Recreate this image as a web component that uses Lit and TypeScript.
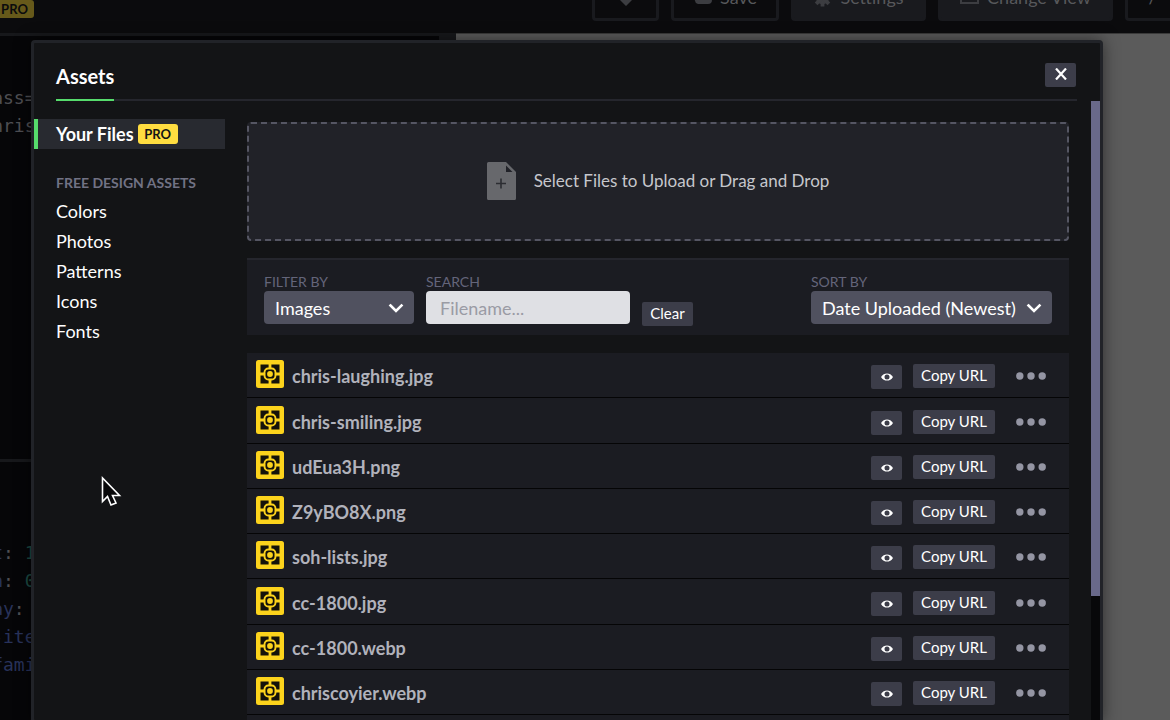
import { LitElement, html, css, svg } from "lit";
import { customElement, property } from "lit/decorators.js";

const base = css`
  * {
    box-sizing: border-box;
  }
  button,
  input,
  select {
    font-family: inherit;
    margin: 0;
    border: 0;
  }
  svg {
    display: block;
    flex: none;
  }
`;

const chevron = html`<svg class="chevron" width="16" height="10" viewBox="0 0 16 10" aria-hidden="true">
  <path d="M2.500 2.500L8 8l5.500-5.500" fill="none" stroke="#fff" stroke-width="2.600" stroke-linecap="square" />
</svg>`;

@customElement("asset-row")
class AssetRow extends LitElement {
  @property() name = "";

  static styles = [
    base,
    css`
      :host {
        display: flex;
        align-items: center;
        height: 45px;
        padding: 2px 23px 0 9px;
        background: #1b1c22;
        border-bottom: 1px solid #050506;
      }
      .name {
        flex: 1;
        margin-left: 8px;
        font-size: 18px;
        font-weight: 700;
        line-height: 24px;
        color: #b1b2bb;
      }
      .thumb {
        margin-bottom: 4px;
      }
      .btn {
        display: flex;
        align-items: center;
        justify-content: center;
        height: 24px;
        padding: 0;
        border-radius: 2px;
        background: #3c3d49;
        color: #fff;
        font-size: 15px;
        line-height: 20px;
      }
      .eye {
        width: 31px;
        margin: 2px 11px 0 0;
      }
      .copy {
        width: 82px;
        margin-right: 21px;
        padding-bottom: 2px;
      }
      .more {
        padding: 0;
        background: none;
      }
    `,
  ];

  render() {
    return html`
      <svg class="thumb" width="28" height="28" viewBox="0 0 28 28" aria-hidden="true">
        <rect width="28" height="28" rx="2.500" fill="#fcd31c" />
        <rect x="4.500" y="4.500" width="19" height="19" fill="#14120a" />
        <path d="M14 4v20M4 14h20" stroke="#fcd31c" stroke-width="2.800" />
        <rect x="7.600" y="7.600" width="12.800" height="12.800" rx="4.600" fill="#fcd31c" />
        <rect x="9.500" y="9.500" width="9" height="9" rx="2.800" fill="#14120a" />
        <circle cx="14" cy="14" r="2.900" fill="#fcd31c" />
      </svg>
      <span class="name">${this.name}</span>
      <button class="btn eye" aria-label="Preview ${this.name}">
        <svg width="12" height="8" viewBox="0 0 12 8">
          <path d="M0 4C1.600 1.400 3.600 .4 6 .4S10.400 1.400 12 4C10.400 6.600 8.400 7.600 6 7.600S1.600 6.600 0 4z" fill="#fff" />
          <circle cx="6" cy="4" r="2.500" fill="#3c3d49" />
        </svg>
      </button>
      <button class="btn copy">Copy URL</button>
      <button class="more" aria-label="More actions for ${this.name}">
        <svg width="30" height="8" viewBox="0 0 30 8" fill="#9495a3">
          <circle cx="3.800" cy="4" r="3.700" />
          <circle cx="15" cy="4" r="3.700" />
          <circle cx="26.200" cy="4" r="3.700" />
        </svg>
      </button>
    `;
  }
}

@customElement("editor-backdrop")
class EditorBackdrop extends LitElement {
  static styles = [
    base,
    css`
      :host {
        display: flex;
        flex-direction: column;
        height: 100%;
        background: #060608;
      }
      .bar {
        display: flex;
        align-items: flex-end;
        justify-content: space-between;
        height: 33px;
        overflow: hidden;
        background: #0b0b0d;
      }
      .pro {
        align-self: flex-start;
        margin-left: -5px;
        width: 39px;
        height: 18px;
        border-radius: 3px;
        background: #66591a;
        color: #0b0b0d;
        font-size: 13px;
        font-weight: 700;
        line-height: 19px;
        text-align: center;
      }
      .tools {
        display: flex;
        gap: 12px;
        margin: 0 -18px 12px 0;
      }
      .tool {
        display: flex;
        align-items: center;
        justify-content: center;
        gap: 8px;
        height: 48px;
        border: 3px solid #191a1e;
        border-radius: 4px;
        background: #0b0b0d;
        color: #57585b;
        font-size: 18px;
        line-height: 24px;
      }
      .solid {
        background: #191a1e;
      }
      .heart {
        width: 67px;
      }
      .save {
        width: 108px;
      }
      .settings {
        width: 135px;
      }
      .view {
        width: 175px;
      }
      .slash {
        width: 63px;
      }
      .work {
        flex: 1;
        display: grid;
        grid-template-columns: 39% 1fr;
        min-height: 0;
      }
      .editors {
        display: grid;
        grid-template-rows: 426px 1fr;
        border-right: 17px solid #17181b;
        min-width: 0;
      }
      .pane {
        border-top: 3px solid #17181b;
        overflow: hidden;
      }
      .code {
        margin: 0 0 0 calc(3px - 8ch);
        font-family: "DejaVu Sans Mono", monospace;
        font-size: 18px;
        line-height: 28px;
        color: #4e4e52;
      }
      .markup {
        padding-top: 48px;
      }
      .rules {
        padding-top: 77px;
      }
      .prop {
        color: #28325a;
      }
      .num {
        color: #1c4a42;
      }
      .preview {
        background: #5b5b5b;
        border-top: 1px solid #3a3a3a;
      }
    `,
  ];

  render() {
    return html`
      <div class="bar">
        <span class="pro">PRO</span>
        <div class="tools">
          <button class="tool heart" aria-label="Love">
            <svg width="20" height="18" viewBox="0 0 20 18">
              <path d="M10 18L1 9A5 5 0 0 1 10 3a5 5 0 0 1 9 6z" fill="#3c3d41" />
            </svg>
          </button>
          <button class="tool save">
            <svg width="19" height="14" viewBox="0 0 19 14">
              <path d="M5 14a5 5 0 0 1-1-9 6 6 0 0 1 11 1 4 4 0 0 1 0 8z" fill="#3c3d41" />
            </svg>
            Save
          </button>
          <button class="tool solid settings">
            <svg width="19" height="19" viewBox="-10 -10 20 20" fill="#3c3d41">
              <circle r="7" />
              ${[0, 45, 90, 135].map((a) => svg`<rect x="-2" y="-9.500" width="4" height="19" transform="rotate(${a})"/>`)}
            </svg>
            Settings
          </button>
          <button class="tool solid view">
            <svg width="19" height="14" viewBox="0 0 19 14" fill="none" stroke="#3c3d41" stroke-width="2">
              <rect x="1" y="1" width="17" height="12" />
              <path d="M4 9h11" />
            </svg>
            Change View
          </button>
          <button class="tool slash">/*</button>
        </div>
      </div>
      <div class="work">
        <div class="editors">
          <div class="pane"><pre class="code markup">&lt;div class="grid"&gt;
  &lt;h1&gt;Chris&lt;/h1&gt;</pre></div>
          <div class="pane"><pre class="code rules"><span class="prop">  height</span>: <span class="num">100%</span>;
<span class="prop">  margin</span>: <span class="num">0</span>;
<span class="prop">  display</span>: grid;
<span class="prop">  place-items</span>: center;
<span class="prop">  font-family</span>: system-ui;</pre></div>
        </div>
        <div class="preview"></div>
      </div>
    `;
  }
}

@customElement("app-root")
class AppRoot extends LitElement {
  private files = [
    "chris-laughing.jpg",
    "chris-smiling.jpg",
    "udEua3H.png",
    "Z9yBO8X.png",
    "soh-lists.jpg",
    "cc-1800.jpg",
    "cc-1800.webp",
    "chriscoyier.webp",
    "avatar.png",
  ];
  private categories = ["Colors", "Photos", "Patterns", "Icons", "Fonts"];

  static styles = [
    base,
    css`
      :host {
        display: block;
        position: relative;
        height: 100vh;
        overflow: hidden;
        font-family: Lato, sans-serif;
        color: #fff;
      }
      .modal {
        position: absolute;
        inset: 40px 67px -3px 31px;
        display: flex;
        flex-direction: column;
        border: 3px solid #212328;
        border-radius: 4px;
        background: #131416;
        box-shadow: 0 0 16px rgba(0, 0, 0, 0.5);
      }
      .head {
        display: flex;
        align-items: stretch;
        justify-content: space-between;
        height: 58px;
        margin: 0 23px 0 22px;
        border-bottom: 2px solid #25262d;
      }
      .title {
        margin: 0 0 -2px;
        padding-top: 21px;
        border-bottom: 2px solid #56dc6c;
        font-size: 20px;
        font-weight: 700;
        line-height: 24px;
      }
      .close {
        display: flex;
        align-items: center;
        justify-content: center;
        align-self: flex-start;
        width: 31px;
        height: 24px;
        margin: 20px 1px 0 0;
        padding: 0 0 2px;
        border-radius: 2px;
        background: #3c3d49;
      }
      .body {
        flex: 1;
        display: grid;
        grid-template-columns: 191px 1fr 9px;
        column-gap: 22px;
        min-height: 0;
      }
      .side {
        padding-top: 18px;
        font-size: 18px;
        line-height: 30px;
      }
      .side a {
        display: block;
        padding-left: 22px;
        color: #fff;
        text-decoration: none;
      }
      .side .active {
        display: flex;
        align-items: center;
        gap: 4px;
        padding-left: 18px;
        border-left: 4px solid #56dc6c;
        background: #282a30;
        font-weight: 700;
      }
      .pro {
        width: 40px;
        height: 20px;
        border-radius: 3px;
        background: #ffdd40;
        color: #131416;
        font-size: 13px;
        line-height: 20px;
        text-align: center;
      }
      .group {
        margin: 24px 0 3px;
        padding-left: 22px;
        font-size: 14px;
        font-weight: 700;
        line-height: 20px;
        color: #717284;
      }
      .list {
        margin: 0;
        padding: 0;
        list-style: none;
      }
      .main {
        padding-top: 21px;
        overflow: hidden;
      }
      .drop {
        display: flex;
        align-items: center;
        justify-content: center;
        gap: 18px;
        width: 100%;
        height: 119px;
        padding: 0 0 2px;
        border: 2px dashed #555663;
        border-radius: 4px;
        background: #212228;
        color: #c6c7cc;
        font-size: 17px;
        line-height: 24px;
      }
      .filters {
        display: flex;
        align-items: flex-end;
        gap: 12px;
        margin: 17px 0 18px;
        padding: 12px 18px 11px 17px;
        border-top: 2px solid #25262d;
        background: #1b1c22;
      }
      .field {
        display: flex;
        flex-direction: column;
      }
      .label {
        font-size: 14px;
        line-height: 19px;
        color: #64657a;
      }
      .pick {
        display: grid;
        align-items: center;
      }
      .pick select {
        grid-area: 1 / 1;
        appearance: none;
        height: 33px;
        padding: 0 36px 0 11px;
        border-radius: 4px;
        background: #50515f;
        color: #fff;
        font-size: 18px;
      }
      .chevron {
        grid-area: 1 / 1;
        justify-self: end;
        margin-right: 10px;
        pointer-events: none;
      }
      .kind {
        width: 150px;
      }
      .sort {
        width: 240px;
        margin-left: auto;
      }
      .search {
        width: 204px;
        height: 33px;
        padding: 0 14px;
        border-radius: 4px;
        background: #dfe0e4;
        color: #131416;
        font-size: 18px;
      }
      .search::placeholder {
        color: #9a9ba4;
      }
      .clear {
        width: 51px;
        height: 24px;
        margin-bottom: -2px;
        padding: 0 0 2px;
        border-radius: 2px;
        background: #3c3d49;
        color: #fff;
        font-size: 15px;
      }
      asset-row:nth-of-type(4n + 2) {
        height: 46px;
      }
      .track {
        background: #08080a;
      }
      .grip {
        height: 80%;
        background: #69698a;
      }
      .cursor {
        position: absolute;
        left: 99px;
        top: 474px;
      }
    `,
  ];

  render() {
    return html`
      <editor-backdrop></editor-backdrop>
      <div class="modal" role="dialog" aria-labelledby="title">
        <header class="head">
          <h1 class="title" id="title">Assets</h1>
          <button class="close" aria-label="Close">
            <svg width="12" height="12" viewBox="0 0 12 12">
              <path d="M1 .5l10 11M11 .5l-10 11" stroke="#fff" stroke-width="2.200" />
            </svg>
          </button>
        </header>
        <div class="body">
          <nav class="side">
            <a class="active" href="#files">Your Files <span class="pro">PRO</span></a>
            <h2 class="group">FREE DESIGN ASSETS</h2>
            <ul class="list">
              ${this.categories.map((c) => html`<li><a href="#${c.toLowerCase()}">${c}</a></li>`)}
            </ul>
          </nav>
          <main class="main">
            <button class="drop">
              <svg width="29" height="38" viewBox="0 0 29 38">
                <path d="M1.500 0H19l10 10v26.500a1.500 1.500 0 0 1-1.500 1.500h-26A1.500 1.500 0 0 1 0 36.500v-35A1.500 1.500 0 0 1 1.500 0z" fill="#67686c" />
                <path d="M19 3.500V10h6.500z" fill="#212228" />
                <path d="M9 21.500h10M14 16.500v10" stroke="#2c2d32" stroke-width="1.600" />
              </svg>
              Select Files to Upload or Drag and Drop
            </button>
            <form class="filters">
              <div class="field kind">
                <label class="label" for="kind">FILTER BY</label>
                <div class="pick">
                  <select id="kind">
                    <option>Images</option>
                  </select>
                  ${chevron}
                </div>
              </div>
              <div class="field">
                <label class="label" for="search">SEARCH</label>
                <input class="search" id="search" type="text" placeholder="Filename..." />
              </div>
              <button class="clear" type="button">Clear</button>
              <div class="field sort">
                <label class="label" for="sort">SORT BY</label>
                <div class="pick">
                  <select id="sort">
                    <option>Date Uploaded (Newest)</option>
                  </select>
                  ${chevron}
                </div>
              </div>
            </form>
            ${this.files.map((f) => html`<asset-row .name=${f}></asset-row>`)}
          </main>
          <div class="track"><div class="grip"></div></div>
        </div>
      </div>
      <svg class="cursor" width="24" height="34" viewBox="0 0 24 34" aria-hidden="true">
        <path d="M3.500 4v23.500l5-5L12 31l5-2-3.500-7.500h7z" fill="#08080a" stroke="#fff" stroke-width="1.600" />
      </svg>
    `;
  }
}
